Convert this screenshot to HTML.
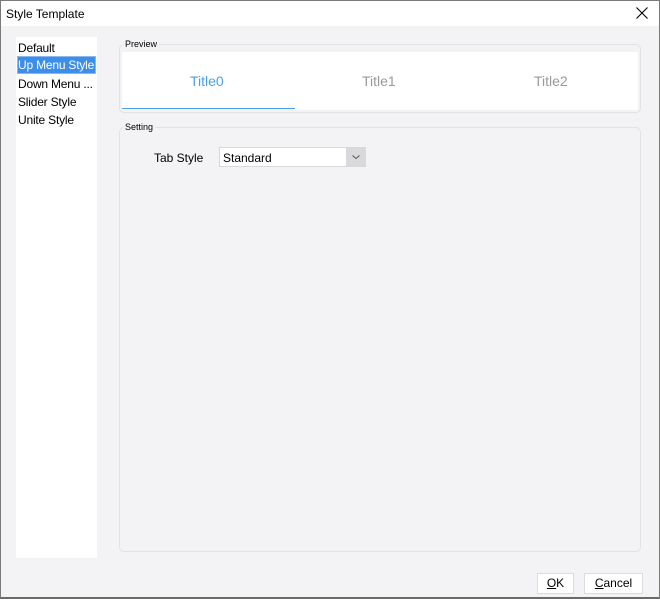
<!DOCTYPE html>
<html><head><meta charset="utf-8"><style>
*{margin:0;padding:0;box-sizing:border-box}
body{width:660px;height:600px;background:#fff;font-family:"Liberation Sans",Arial,sans-serif;font-size:12px;color:#000;position:relative;overflow:hidden}
.win{position:absolute;left:0;top:0;width:660px;height:599px;border:1px solid #7a7a7a;border-bottom:2px solid #6a6a6a;background:#f3f3f5}
.title{position:absolute;left:0;top:0;width:658px;height:25px;background:#fff}
.title span{position:absolute;left:5px;top:6px;font-size:12px}
.x{position:absolute;left:635px;top:6px}
.abs{position:absolute}
.list{left:16px;top:37px;width:81px;height:521px;background:#fff}
.item{position:absolute;left:1px;width:79px;height:18px;line-height:18px;padding-left:1px;font-size:12px;white-space:nowrap;overflow:hidden;letter-spacing:-0.2px}
.sel{background:#3c8ee8;color:#fff;border:1px solid #8ab8f0;line-height:16px;padding-left:0}
.grp{border:1px solid #e2e2e6;border-radius:5px}
.lbl{position:absolute;font-size:9px;background:#f3f3f5;padding:0 2px;color:#000}
.tab{position:absolute;top:73px;font-size:14px;color:#999}
.btn{position:absolute;top:573px;height:21px;background:#fff;border:1px solid #dcdcdc;font-size:12px;text-align:center;line-height:19px}
</style></head><body>
<div class="win">
 <div class="title"><span>Style Template</span>
  <svg class="x" width="12" height="12" viewBox="0 0 12 12"><path d="M0.5 0.5L11.5 11.5M11.5 0.5L0.5 11.5" stroke="#000" stroke-width="1.1"/></svg>
 </div>
</div>
<div class="abs list">
 <div class="item" style="top:2px">Default</div>
 <div class="item sel" style="top:19px">Up Menu Style</div>
 <div class="item" style="top:38px">Down Menu ...</div>
 <div class="item" style="top:56px">Slider Style</div>
 <div class="item" style="top:74px">Unite Style</div>
</div>
<div class="abs grp" style="left:119px;top:44px;width:522px;height:69px"></div>
<div class="lbl" style="left:123px;top:39px">Preview</div>
<div class="abs" style="left:122px;top:52px;width:516px;height:58px;background:#fff"></div>
<div class="abs" style="left:122px;top:108px;width:173px;height:1px;background:#4a9de8"></div>
<div class="tab" style="left:190px;color:#4aa0e8">Title0</div>
<div class="tab" style="left:362px">Title1</div>
<div class="tab" style="left:534px">Title2</div>
<div class="abs grp" style="left:119px;top:127px;width:522px;height:425px"></div>
<div class="lbl" style="left:123px;top:122px">Setting</div>
<div class="abs" style="left:154px;top:151px;font-size:12px">Tab Style</div>
<div class="abs" style="left:219px;top:147px;width:147px;height:20px;background:#fff;border:1px solid #d8d8dc"></div>
<div class="abs" style="left:223px;top:151px;font-size:12px">Standard</div>
<div class="abs" style="left:346px;top:147px;width:20px;height:20px;background:#d9d9dc"></div>
<svg class="abs" style="left:351px;top:154px" width="10" height="6" viewBox="0 0 10 6"><path d="M1.5 1.5L5 4.5L8.5 1.5" stroke="#555" fill="none" stroke-width="1"/></svg>
<div class="btn" style="left:537px;width:37px"><u>O</u>K</div>
<div class="btn" style="left:584px;width:59px"><u>C</u>ancel</div>
</body></html>
